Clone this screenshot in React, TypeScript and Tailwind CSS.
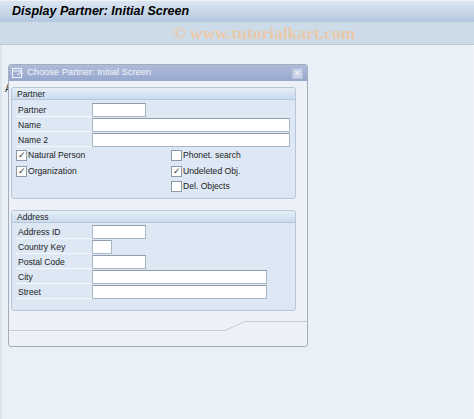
import React from 'react';

const font = { fontFamily: '"Liberation Sans", Arial, sans-serif' };

function Field({ label, width }: { label: string; width: number }) {
  return (
    <div className="flex items-center h-[15px]">
      <div className="w-[76px] h-[14px] ml-[4px] pl-[2px] border-b border-white/70 text-[8.6px] leading-[14px] text-[#222]">
        {label}
      </div>
      <div
        className="h-[14px] bg-white border border-[#a9b6c4] border-t-[#8f9dac]"
        style={{ width }}
      />
    </div>
  );
}

function Check({ label, checked }: { label: string; checked?: boolean }) {
  return (
    <div className="flex items-center h-[15.5px] text-[8.6px] text-[#222]">
      <span className="w-[11px] h-[11px] mr-[1px] bg-white border border-[#8d9aaa] flex items-center justify-center text-[9px] leading-none text-[#333]">
        {checked ? '✓' : ''}
      </span>
      {label}
    </div>
  );
}

function GroupBox({ title, children, className }: { title: string; children: React.ReactNode; className?: string }) {
  return (
    <div className={`border border-[#b6c6d8] rounded-[3px] bg-[#dde8f4] ${className ?? ''}`}>
      <div className="h-[12px] px-[5px] text-[8.6px] leading-[12px] text-[#222] bg-gradient-to-b from-[#e6eff8] to-[#c9dbed] border-b border-[#b6c6d8] rounded-t-[3px]">
        {title}
      </div>
      {children}
    </div>
  );
}

export default function App() {
  return (
    <div className="relative w-[474px] h-[419px] bg-[#e9f0f7] overflow-hidden" style={font}>
      {/* screen title */}
      <div className="h-[22px] bg-gradient-to-b from-[#dce6f1] to-[#b3c8df] border-t border-[#eef3f8] flex items-center pl-[12px]">
        <span className="text-[12.5px] font-bold italic text-black">
          Display Partner: Initial Screen
        </span>
      </div>
      {/* toolbar with watermark */}
      <div className="h-[23px] bg-[#cddbe8] border-b border-[#bcc8d3] flex items-center justify-center pl-[54px]">
        <span className="text-[17.5px] font-bold text-[#ebc9a8]" style={{ fontFamily: '"Liberation Serif", "Times New Roman", serif' }}>
          © www.tutorialkart.com
        </span>
      </div>
      <div className="border-l-2 border-[#dce4ec] border-r border-r-[#f2f6fa] h-full">
        <div className="pt-[36px] pl-[3px] text-[10px] text-[#333]">A</div>
      </div>

      {/* dialog window */}
      <div className="absolute left-[8px] top-[64px] w-[300px] h-[283px] bg-[#edf1f7] border border-[#a3aebb] rounded-[3px] flex flex-col">
        <div className="h-[16px] bg-gradient-to-b from-[#aebbd9] to-[#97a8cf] rounded-t-[2px] flex items-center pl-[3px] pr-[4px]">
          <svg width="12" height="10" viewBox="0 0 12 10" className="mr-[3px]">
            <rect x="0.5" y="0.5" width="9" height="9" fill="none" stroke="#eef2fa" strokeWidth="1" />
            <line x1="0.5" y1="3" x2="9.5" y2="3" stroke="#eef2fa" />
            <path d="M5 7 L10 4 M7.5 4 L10 4 L10 6.5" stroke="#eef2fa" strokeWidth="1" fill="none" />
          </svg>
          <span className="text-[9.3px] text-[#f4f6fb]">Choose Partner: Initial Screen</span>
          <span className="ml-auto w-[11px] h-[11px] bg-[#c9d2e6] border border-[#b5c0d9] flex items-center justify-center text-[9px] leading-none text-[#eef2f8] font-bold">
            ×
          </span>
        </div>

        <div className="pt-[6px] pl-[2px] pr-[11px] flex flex-col gap-[11px]">
          <GroupBox title="Partner" className="pb-[3px]">
            <div className="pt-[2px]">
              <Field label="Partner" width={54} />
              <Field label="Name" width={198} />
              <Field label="Name 2" width={198} />
            </div>
            <div className="flex pt-[1px] pl-[4px]">
              <div className="w-[155px]">
                <Check label="Natural Person" checked />
                <Check label="Organization" checked />
              </div>
              <div>
                <Check label="Phonet. search" />
                <Check label="Undeleted Obj." checked />
                <Check label="Del. Objects" />
              </div>
            </div>
          </GroupBox>

          <GroupBox title="Address" className="pb-[10px]">
            <div className="pt-[2px]">
              <Field label="Address ID" width={54} />
              <Field label="Country Key" width={20} />
              <Field label="Postal Code" width={54} />
              <Field label="City" width={175} />
              <Field label="Street" width={175} />
            </div>
          </GroupBox>
        </div>

        <svg width="298" height="14" viewBox="0 0 298 14" className="mt-[9px]">
          <path d="M0 10.5 L216 10.5 L236 1.5 L298 1.5" stroke="#c3ccd6" strokeWidth="1" fill="none" />
        </svg>
      </div>
    </div>
  );
}
